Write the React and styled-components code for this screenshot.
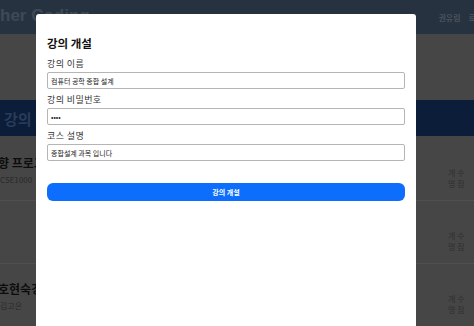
import styled, { createGlobalStyle } from "styled-components"

const GlobalStyle = createGlobalStyle`
html, body {
    margin: 0;
    padding: 0;
    width: 474px;
    height: 326px;
    overflow: hidden;
    font-family: "Noto Sans CJK KR", "Noto Sans", sans-serif;
}
`

const courses = [
    { title: "향 프로그래밍", code: "CSE1000" },
    { title: "", code: "" },
    { title: "호현숙경", code: "김고은" },
]

const App = () => {
    return (
        <Page>
            <GlobalStyle />
            <NavBar>
                <Brand>her Coding</Brand>
                <NavLinks>
                    <span>권유림</span>
                    <span>로그아웃</span>
                </NavLinks>
            </NavBar>
            <Spacer />
            <Banner>강의 목록</Banner>
            <List>
                {courses.map((c, i) => (
                    <Row key={i}>
                        <div>
                            <p className="title">{c.title}</p>
                            <p className="code">{c.code}</p>
                        </div>
                        <div className="meta">
                            <span>개 수</span>
                            <span>명 참</span>
                        </div>
                    </Row>
                ))}
            </List>
            <Overlay />
            <Modal>
                <h4 className="heading">강의 개설</h4>
                <Field>
                    <label>강의 이름</label>
                    <Input defaultValue="컴퓨터 공학 종합 설계" />
                </Field>
                <Field>
                    <label>강의 비밀번호</label>
                    <Input type="password" defaultValue="1234" />
                </Field>
                <Field>
                    <label>코스 설명</label>
                    <Input defaultValue="종합설계 과목 입니다" />
                </Field>
                <SubmitButton>강의 개설</SubmitButton>
            </Modal>
        </Page>
    )
}

const Page = styled.div`
position: relative;
width: 474px;
height: 326px;
overflow: hidden;
background: #8c8c8c;
`

const NavBar = styled.div`
height: 34px;
background: #4e6580;
display: flex;
align-items: center;
justify-content: space-between;
`

const Brand = styled.span`
color: #7f93ab;
font-family: "Liberation Sans", sans-serif;
font-weight: 700;
font-size: 17px;
margin-top: -2px;
`

const NavLinks = styled.div`
display: flex;
gap: 8px;
font-size: 8px;
font-weight: 700;
color: #8fa2b8;
margin-right: -24px;
`

const Spacer = styled.div`
height: 66px;
`

const Banner = styled.div`
height: 36px;
background: #163a70;
color: #4e78b4;
font-size: 15px;
font-weight: 700;
display: flex;
align-items: center;
padding-left: 4px;
`

const List = styled.div`
padding-top: 2px;
`

const Row = styled.div`
height: 62px;
border-bottom: 1px solid #a0a0a0;
display: flex;
justify-content: space-between;
align-items: center;
.title {
    margin: 0;
    font-size: 12px;
    font-weight: 700;
    color: #1a1a1a;
    margin-left: -2px;
    white-space: nowrap;
}
.code {
    margin: 3px 0 0;
    font-size: 8px;
    color: #555;
}
.meta {
    display: flex;
    flex-direction: column;
    font-size: 8px;
    color: #606060;
    margin-right: -14px;
    line-height: 11px;
    width: 40px;
    margin-top: 18px;
}
`

const Overlay = styled.div`
position: absolute;
inset: 0;
background: rgba(0, 0, 0, 0.5);
`

const Modal = styled.div`
position: absolute;
top: 14px;
left: 36px;
width: 380px;
height: 330px;
background: #fff;
border-radius: 3px;
box-sizing: border-box;
padding: 21px 11px 0;
display: flex;
flex-direction: column;
.heading {
    margin: 0 0 5px;
    font-size: 11.5px;
    font-weight: 700;
    color: #111;
    line-height: 16px;
}
`

const Field = styled.div`
display: flex;
flex-direction: column;
margin-bottom: 3px;
label {
    font-size: 9px;
    color: #333;
    line-height: 16px;
    letter-spacing: 0.4px;
}
`

const Input = styled.input`
box-sizing: border-box;
height: 17px;
width: 100%;
border: 1px solid #b5b5b5;
border-radius: 2px;
padding: 0 3px;
font-family: "Noto Sans CJK KR", sans-serif;
font-size: 7px;
color: #222;
outline: none;
`

const SubmitButton = styled.button`
margin-top: 19px;
height: 18px;
border: none;
border-radius: 6px;
background: #0d6efd;
color: #fff;
font-family: "Noto Sans CJK KR", sans-serif;
font-weight: 700;
font-size: 7px;
cursor: pointer;
`

export default App
